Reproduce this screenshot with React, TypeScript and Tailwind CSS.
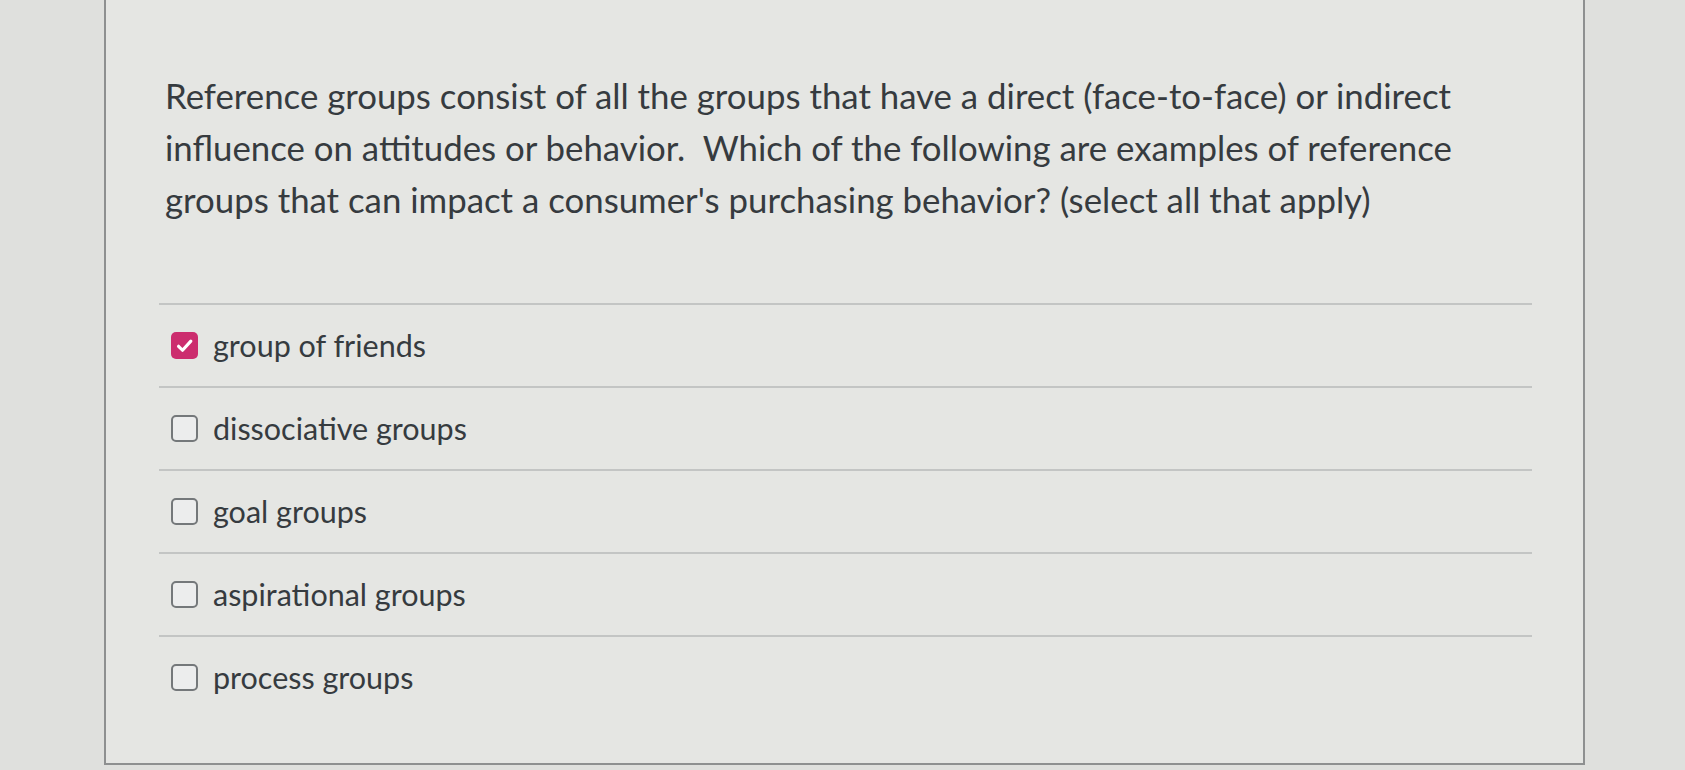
const options = [
  { label: 'group of friends', checked: true },
  { label: 'dissociative groups', checked: false },
  { label: 'goal groups', checked: false },
  { label: 'aspirational groups', checked: false },
  { label: 'process groups', checked: false },
]

function Checkbox({ checked }: { checked: boolean }) {
  if (checked) {
    return (
      <span className="flex h-[27px] w-[27px] shrink-0 items-center justify-center rounded-[5px] bg-[#cc2d6e]">
        <svg className="h-[19px] w-[19px]" viewBox="0 0 24 24" fill="none" stroke="white" strokeWidth="4" strokeLinecap="round" strokeLinejoin="round" aria-hidden="true">
          <path d="M4.5 13l5 5L20 6.5" />
        </svg>
      </span>
    )
  }
  return <span className="h-[27px] w-[27px] shrink-0 rounded-[5px] border-2 border-[#74787a] bg-[#eceded]" />
}

export default function App() {
  return (
    <div className="flex h-[770px] w-full bg-[#dfe0dd] pb-[5px] pl-[104px] pr-[100px] font-['Lato',sans-serif] text-[#363b3f]">
      <div className="flex flex-1 flex-col border-x-2 border-b-2 border-[#8e9090] bg-[#e5e6e3] pl-[59px] pr-[51px] pt-[70px]">
        <p className="text-[34.8px] leading-[52px]">
          Reference groups consist of all the groups that have a direct (face-to-face) or indirect influence on attitudes or behavior.&nbsp; Which of the following are examples of reference groups that can impact a consumer's purchasing behavior? (select all that apply)
        </p>

        <ul className="ml-[-6px] mt-[77px]">
          {options.map((o) => (
            <li key={o.label} className="flex h-[83px] items-center gap-[15px] border-t-2 border-[#c3c5c4] pl-[12px]">
              <Checkbox checked={o.checked} />
              <span className="text-[30.5px]">{o.label}</span>
            </li>
          ))}
        </ul>
      </div>
    </div>
  )
}
